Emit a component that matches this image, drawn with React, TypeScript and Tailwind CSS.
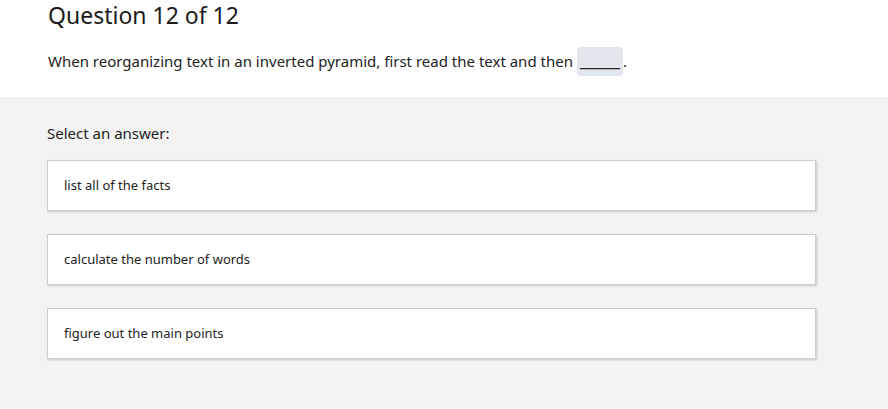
const ANSWERS = ['list all of the facts', 'calculate the number of words', 'figure out the main points'];

export default function App() {
  return (
    <div className="min-h-screen bg-[#f3f3f3] font-['Segoe_UI','Noto_Sans',sans-serif] text-[#222]">
      {/* Header */}
      <div className="bg-white px-12 h-[97px]">
        <h1 className="text-[23px] leading-[31px] font-normal text-[#1b1b1b]">Question 12 of 12</h1>
        <p className="mt-[16px] text-[15px] flex items-center">
          When reorganizing text in an inverted pyramid, first read the text and then
          <span className="ml-[4px] inline-flex items-end justify-center w-[46px] h-[29px] rounded bg-[#e2e7ee] pb-[8px] text-[18px] leading-none">_____</span>
          <span>.</span>
        </p>
      </div>

      {/* Answers */}
      <div className="px-[47px] pt-[24px] pb-10">
        <div className="text-[15px] leading-[24px]">Select an answer:</div>
        <div className="mt-[15px] flex flex-col gap-[23px] w-[769px]">
          {ANSWERS.map((a) => (
            <div
              key={a}
              className="h-[51px] bg-white border border-[#cccccc] shadow-[1px_1px_2px_rgba(0,0,0,0.18)] flex items-center px-4 text-[13px] text-[#222]"
            >
              {a}
            </div>
          ))}
        </div>
      </div>
    </div>
  );
}
